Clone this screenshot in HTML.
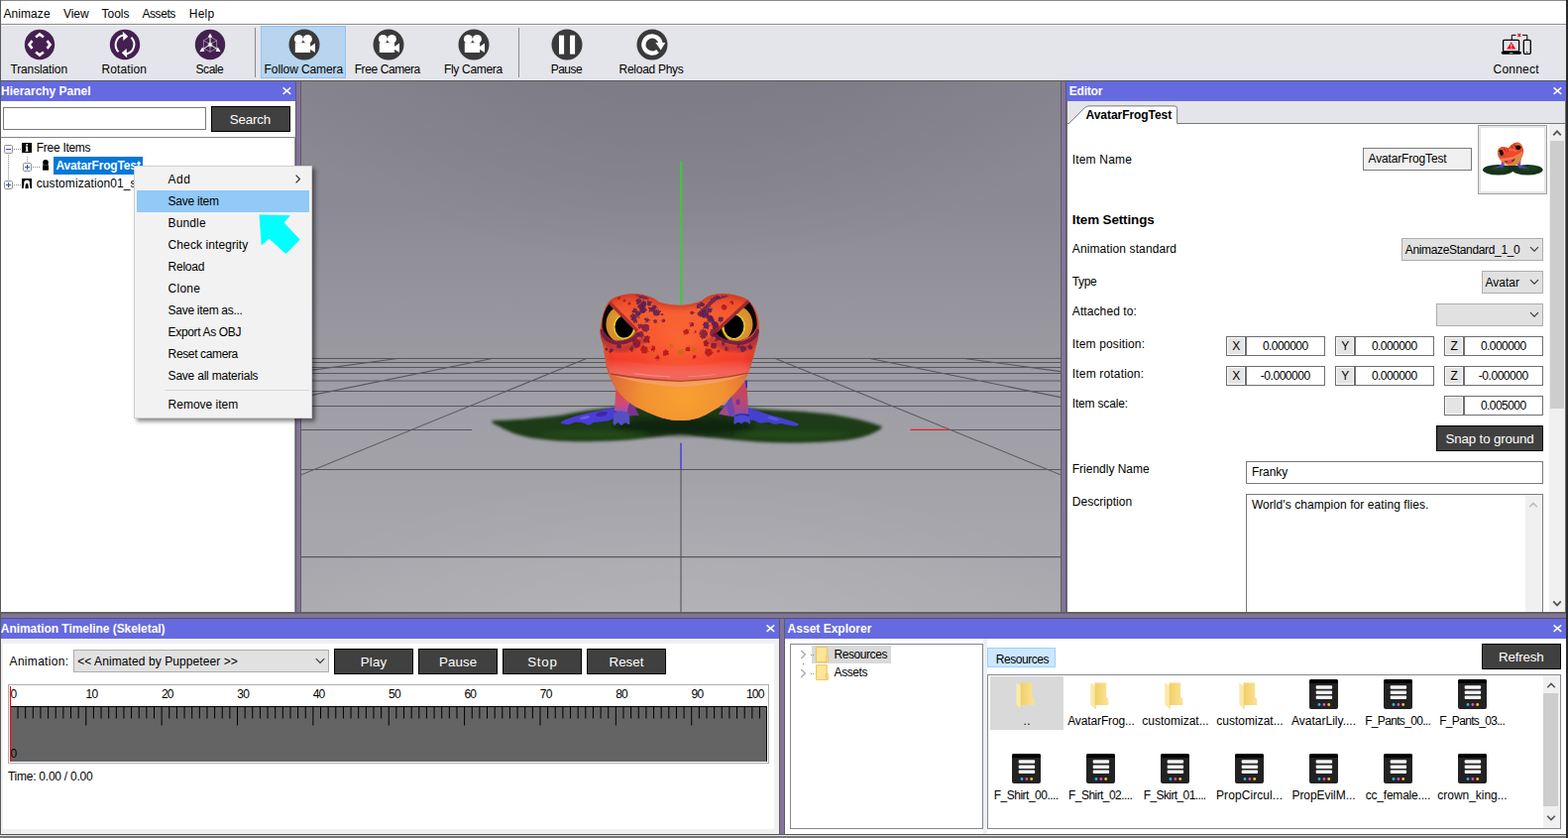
<!DOCTYPE html>
<html lang="en"><head><meta charset="utf-8"><title>Animaze Editor</title>
<style>
html,body{margin:0;padding:0;}
body{width:1582px;height:845px;overflow:hidden;background:#fff;font-family:"Liberation Sans", sans-serif;font-size:12px;position:relative;}
.a{position:absolute;box-sizing:border-box;}
.t{position:absolute;white-space:nowrap;line-height:1;}
svg{position:absolute;overflow:visible;}
</style></head>
<body>
<div class="a" style="left:0px;top:0px;width:1582px;height:845px;background:#ffffff;"></div>
<div class="a" style="left:0px;top:81px;width:1580px;height:761px;background:#84739b;"></div>
<div class="a" style="left:0px;top:0px;width:1582px;height:1px;background:#8a8a8a;"></div>
<div class="a" style="left:1px;top:1px;width:1579px;height:21px;background:#ffffff;"></div>
<div class="a" style="left:1px;top:22px;width:1579px;height:2px;background:#f6f6f6;"></div>
<div class="a" style="left:1px;top:24px;width:1579px;height:1px;background:#8e8e8e;"></div>
<div class="a" style="left:1px;top:25px;width:1579px;height:1px;background:#fbfbfb;"></div>
<div class="a" style="left:1px;top:26px;width:1579px;height:55px;background:#e4e5ea;"></div>
<div class="a" style="left:1px;top:81px;width:1579px;height:1px;background:#5a5a5a;"></div>
<span class="t" style="top:8.34px;font-size:12px;color:#000;letter-spacing:0.083px;left:3.40px;">Animaze</span>
<span class="t" style="top:8.34px;font-size:12px;color:#000;letter-spacing:-0.098px;left:64.10px;">View</span>
<span class="t" style="top:8.34px;font-size:12px;color:#000;left:102.50px;">Tools</span>
<span class="t" style="top:8.34px;font-size:12px;color:#000;letter-spacing:-0.443px;left:143.50px;">Assets</span>
<span class="t" style="top:8.34px;font-size:12px;color:#000;letter-spacing:0.240px;left:190.80px;">Help</span>
<div class="a" style="left:263px;top:26px;width:86px;height:53px;background:#b8d4ee;border:1px solid #90c3f3;"></div>
<div class="a" style="left:257px;top:28px;width:1px;height:50px;background:#8c8c8c;"></div>
<div class="a" style="left:523px;top:28px;width:1px;height:50px;background:#8c8c8c;"></div>
<span class="t" style="top:64.34px;font-size:12px;color:#000;letter-spacing:-0.122px;left:10.40px;">Translation</span>
<span class="t" style="top:64.34px;font-size:12px;color:#000;letter-spacing:0.114px;left:102.50px;">Rotation</span>
<span class="t" style="top:64.34px;font-size:12px;color:#000;letter-spacing:-0.482px;left:197.60px;">Scale</span>
<span class="t" style="top:64.34px;font-size:12px;color:#000;letter-spacing:-0.092px;left:266.60px;">Follow Camera</span>
<span class="t" style="top:64.34px;font-size:12px;color:#000;letter-spacing:-0.410px;left:357.70px;">Free Camera</span>
<span class="t" style="top:64.34px;font-size:12px;color:#000;letter-spacing:-0.302px;left:447.90px;">Fly Camera</span>
<span class="t" style="top:64.34px;font-size:12px;color:#000;letter-spacing:-0.559px;left:555.80px;">Pause</span>
<span class="t" style="top:64.34px;font-size:12px;color:#000;letter-spacing:-0.285px;left:624.60px;">Reload Phys</span>
<span class="t" style="top:64.34px;font-size:12px;color:#000;letter-spacing:0.198px;left:1506.60px;">Connect</span>
<svg style="left:24px;top:29px" width="32" height="32" viewBox="-16 -16 32 32"><circle r="15.2" fill="#432050"/><g transform="rotate(0)"><path d="M-3.9 -7.5 L0 -10.6 L3.9 -7.5" fill="none" stroke="#fff" stroke-width="2.6" stroke-linecap="butt" stroke-linejoin="miter"/></g><g transform="rotate(90)"><path d="M-3.9 -7.5 L0 -10.6 L3.9 -7.5" fill="none" stroke="#fff" stroke-width="2.6" stroke-linecap="butt" stroke-linejoin="miter"/></g><g transform="rotate(180)"><path d="M-3.9 -7.5 L0 -10.6 L3.9 -7.5" fill="none" stroke="#fff" stroke-width="2.6" stroke-linecap="butt" stroke-linejoin="miter"/></g><g transform="rotate(270)"><path d="M-3.9 -7.5 L0 -10.6 L3.9 -7.5" fill="none" stroke="#fff" stroke-width="2.6" stroke-linecap="butt" stroke-linejoin="miter"/></g></svg>
<svg style="left:110px;top:29px" width="32" height="32" viewBox="-16 -16 32 32"><circle r="15.2" fill="#432050"/><path d="M-6.4 7.2 A9.8 9.8 0 0 1 -1.6 -9.4" fill="none" stroke="#fff" stroke-width="2"/><path d="M-2.2 -13.2 L3.2 -8.3 L-1.6 -4.0 Z" fill="#fff"/><path d="M6.4 -7.2 A9.8 9.8 0 0 1 1.6 9.4" fill="none" stroke="#fff" stroke-width="2"/><path d="M2.2 13.2 L-3.2 8.3 L1.6 4.0 Z" fill="#fff"/></svg>
<svg style="left:196px;top:29px" width="32" height="32" viewBox="-16 -16 32 32"><circle r="15.2" fill="#432050"/><g fill="none" stroke="#fff" stroke-opacity="0.55" stroke-width="0.8"><path d="M0 -8 L6.6 -4.2 L6.6 3.6 L0 7.4 L-6.6 3.6 L-6.6 -4.2 Z"/><path d="M0 -0.4 L6.6 -4.2 M0 -0.4 L-6.6 -4.2 M0 -0.4 L0 7.4"/><path d="M0 0 L-6.6 3.6 M0 0 L6.6 3.6 M0 0 L0 -8" stroke-opacity="0.4"/></g><g stroke="#fff" stroke-width="0.9" stroke-opacity="0.95"><path d="M0 0 L0 -9"/><path d="M0 0 L-8 5.2"/><path d="M0 0 L8 5.2"/></g><path d="M-2.3 -7.6 L0 -11.4 L2.3 -7.6 Z" fill="#fff"/><path d="M-10.6 7.2 L-7.8 2.6 L-5.6 6.8 Z" fill="#fff"/><path d="M10.6 7.2 L7.8 2.6 L5.6 6.8 Z" fill="#fff"/><circle r="2.6" fill="#fff" fill-opacity="0.35"/><circle r="1.7" fill="#fff" fill-opacity="0.9"/></svg>
<svg style="left:291px;top:29px" width="32" height="32" viewBox="-16 -16 32 32"><circle r="15.5" fill="#3a3a3a"/><circle cx="-5.6" cy="-5.6" r="4.5" fill="#fff"/><circle cx="3.4" cy="-5.6" r="4.5" fill="#fff"/><rect x="-9.2" y="-1.8" width="15.3" height="9.8" fill="#fff"/><path d="M6 2 L11 -1.4 L11 8 L6 4.8 Z" fill="#fff"/></svg>
<svg style="left:376px;top:29px" width="32" height="32" viewBox="-16 -16 32 32"><circle r="15.5" fill="#3a3a3a"/><circle cx="-5.6" cy="-5.6" r="4.5" fill="#fff"/><circle cx="3.4" cy="-5.6" r="4.5" fill="#fff"/><rect x="-9.2" y="-1.8" width="15.3" height="9.8" fill="#fff"/><path d="M6 2 L11 -1.4 L11 8 L6 4.8 Z" fill="#fff"/></svg>
<svg style="left:462px;top:29px" width="32" height="32" viewBox="-16 -16 32 32"><circle r="15.5" fill="#3a3a3a"/><circle cx="-5.6" cy="-5.6" r="4.5" fill="#fff"/><circle cx="3.4" cy="-5.6" r="4.5" fill="#fff"/><rect x="-9.2" y="-1.8" width="15.3" height="9.8" fill="#fff"/><path d="M6 2 L11 -1.4 L11 8 L6 4.8 Z" fill="#fff"/></svg>
<svg style="left:556px;top:29px" width="32" height="32" viewBox="-16 -16 32 32"><circle r="15.5" fill="#3a3a3a"/><rect x="-8" y="-9.4" width="5.1" height="19" fill="#fff"/><rect x="3" y="-9.4" width="5.1" height="19" fill="#fff"/></svg>
<svg style="left:642px;top:29px" width="32" height="32" viewBox="-16 -16 32 32"><circle r="15.5" fill="#3a3a3a"/><path d="M5.53 6.59 A8.6 8.6 0 1 1 8.5 -1.3" fill="none" stroke="#fff" stroke-width="4.3"/><path d="M3.4 -1.9 L13.3 -1.9 L8.7 5.4 Z" fill="#fff"/></svg>
<svg style="left:0;top:0" width="1582" height="82" viewBox="0 0 1582 82"><g fill="none" stroke="#000" stroke-width="1.3"><rect x="1516.6" y="40.4" width="16" height="11.5" rx="1"/><rect x="1537.3" y="40.3" width="7" height="14" rx="1.3"/><path d="M1525.3 40 L1525.3 35.4 L1529.6 35.4 M1536 35.4 L1540.8 35.4 L1540.8 40" stroke-width="1"/></g><path d="M1514.8 52 L1534.8 52 L1534.8 53.4 Q1534.8 54.8 1533.3 54.8 L1516.3 54.8 Q1514.8 54.8 1514.8 53.4 Z" fill="#000"/><rect x="1523" y="53.2" width="3.4" height="0.9" fill="#bbb"/><circle cx="1540.8" cy="52.6" r="0.7" fill="#000"/><path d="M1524.8 42.2 L1529.4 49.6 L1520.2 49.6 Z" fill="#e81123"/><rect x="1524.4" y="44.4" width="0.9" height="3" fill="#fff"/><rect x="1524.4" y="48" width="0.9" height="0.9" fill="#fff"/><path d="M1531.4 34 L1534.2 37 M1534.2 34 L1531.4 37" stroke="#e81123" stroke-width="1.1" fill="none"/></svg>
<div class="a" style="left:1px;top:82px;width:297px;height:20px;background:#656ae0;"></div>
<div class="a" style="left:1px;top:102px;width:297px;height:515px;background:#ffffff;"></div>
<div class="a" style="left:298px;top:82px;width:1px;height:536px;background:#5c5c60;"></div>
<div class="a" style="left:303px;top:82px;width:1px;height:536px;background:#5c5c60;"></div>
<span class="t" style="top:86.44px;font-size:12px;color:#fff;font-weight:700;letter-spacing:-0.009px;left:1.00px;">Hierarchy Panel</span>
<svg style="left:285px;top:88px" width="9" height="8" viewBox="0 0 9 8"><path d="M0.6 0.4 L8.2 6.9 M8.2 0.4 L0.6 6.9" stroke="#fff" stroke-width="1.5" fill="none"/></svg>
<div class="a" style="left:3px;top:108px;width:205px;height:23px;background:#fff;border:1px solid #7a7a7a;"></div>
<div class="a" style="left:213px;top:107px;width:80px;height:26px;background:#404040;border:1px solid #000;"></div>
<span class="t" style="top:114.32px;font-size:13.33px;color:#fff;letter-spacing:-0.167px;left:231.80px;">Search</span>
<div class="a" style="left:1px;top:138px;width:297px;height:1px;background:#82858c;"></div>
<div class="a" style="left:297px;top:138px;width:1px;height:479px;background:#9a9a9a;"></div>
<div class="a" style="left:14px;top:150px;width:8px;height:1px;background:repeating-linear-gradient(90deg,#8a8a8a 0 1px,transparent 1px 2px);"></div>
<div class="a" style="left:33px;top:168px;width:8px;height:1px;background:repeating-linear-gradient(90deg,#8a8a8a 0 1px,transparent 1px 2px);"></div>
<div class="a" style="left:14px;top:186px;width:8px;height:1px;background:repeating-linear-gradient(90deg,#8a8a8a 0 1px,transparent 1px 2px);"></div>
<div class="a" style="left:8px;top:156px;width:1px;height:26px;background:repeating-linear-gradient(180deg,#8a8a8a 0 1px,transparent 1px 2px);"></div>
<div class="a" style="left:27px;top:158px;width:1px;height:6px;background:repeating-linear-gradient(180deg,#8a8a8a 0 1px,transparent 1px 2px);"></div>
<svg style="left:4px;top:146px" width="9" height="9" viewBox="0 0 9 9"><rect x="0.5" y="0.5" width="8" height="8" rx="1.2" fill="#f4f4f4" stroke="#929292"/><rect x="1.2" y="1.2" width="6.6" height="3.2" fill="#fff"/><path d="M2 4.5 H7" stroke="#3a50b0" stroke-width="1"/></svg>
<svg style="left:23px;top:164px" width="9" height="9" viewBox="0 0 9 9"><rect x="0.5" y="0.5" width="8" height="8" rx="1.2" fill="#f4f4f4" stroke="#929292"/><rect x="1.2" y="1.2" width="6.6" height="3.2" fill="#fff"/><path d="M2 4.5 H7" stroke="#3a50b0" stroke-width="1"/><path d="M4.5 2 V7" stroke="#3a50b0" stroke-width="1"/></svg>
<svg style="left:4px;top:182px" width="9" height="9" viewBox="0 0 9 9"><rect x="0.5" y="0.5" width="8" height="8" rx="1.2" fill="#f4f4f4" stroke="#929292"/><rect x="1.2" y="1.2" width="6.6" height="3.2" fill="#fff"/><path d="M2 4.5 H7" stroke="#3a50b0" stroke-width="1"/><path d="M4.5 2 V7" stroke="#3a50b0" stroke-width="1"/></svg>
<svg style="left:22px;top:144px" width="10" height="10" viewBox="0 0 10 10"><rect width="10" height="10" fill="#000"/><rect x="4.3" y="1.1" width="1.7" height="1.6" fill="#fff"/><path d="M3.8 3.6 H6 V8 H6.6 V8.8 H3.6 V8 H4.3 V4.4 H3.8 Z" fill="#fff"/></svg>
<svg style="left:43px;top:161px" width="7" height="11" viewBox="43 161 7 11"><circle cx="46" cy="164" r="2.9" fill="#000"/><path d="M43.1 166.4 H49 V171.7 H43.1 Z" fill="#000"/><path d="M45 166.4 L46 167.4 L47 166.4 Z" fill="#777"/></svg>
<svg style="left:22px;top:180px" width="10" height="10" viewBox="22 180 10 10"><rect x="22" y="180" width="10" height="10" fill="#000"/><path d="M23.6 190 Q24.6 186 24.3 183.6 Q24.6 181.5 27.1 181.5 Q29.6 181.5 29.9 183.6 Q29.6 186 30.6 190 L28.7 190 Q28.9 185.4 27.1 184.6 Q25.4 185.4 25.5 190 Z" fill="#fff"/></svg>
<span class="t" style="top:143.04px;font-size:12px;color:#000;letter-spacing:-0.284px;left:36.80px;">Free Items</span>
<div class="a" style="left:54px;top:158px;width:90px;height:18px;background:#0078d7;"></div>
<span class="t" style="top:161.34px;font-size:12px;color:#fff;font-weight:700;letter-spacing:-0.143px;left:56.40px;">AvatarFrogTest</span>
<span class="t" style="top:178.74px;font-size:12px;color:#000;letter-spacing:0.077px;left:36.80px;">customization01_set</span>
<svg style="left:304px;top:82px" width="766" height="536" viewBox="304 82 766 536"><defs><linearGradient id="sky" x1="0" y1="82" x2="0" y2="618" gradientUnits="userSpaceOnUse"><stop offset="0" stop-color="#86848e"/><stop offset="0.0224" stop-color="#87858f"/><stop offset="0.239" stop-color="#8c8b95"/><stop offset="0.49" stop-color="#9a989f"/><stop offset="0.575" stop-color="#9f9da5"/><stop offset="0.957" stop-color="#aaa9ae"/><stop offset="1" stop-color="#abaaaf"/></linearGradient><radialGradient id="skyc" cx="0" cy="0" r="1" gradientUnits="userSpaceOnUse" gradientTransform="translate(687 60) scale(430 210)"><stop offset="0" stop-color="#000" stop-opacity="0.075"/><stop offset="0.45" stop-color="#000" stop-opacity="0.055"/><stop offset="1" stop-color="#000" stop-opacity="0"/></radialGradient><radialGradient id="skyd" cx="0" cy="0" r="1" gradientUnits="userSpaceOnUse" gradientTransform="translate(687 650) scale(440 170)"><stop offset="0" stop-color="#fff" stop-opacity="0.11"/><stop offset="0.45" stop-color="#fff" stop-opacity="0.07"/><stop offset="1" stop-color="#fff" stop-opacity="0"/></radialGradient><clipPath id="vp"><rect x="304" y="82" width="766" height="536"/></clipPath><filter id="b1" x="-10%" y="-30%" width="120%" height="160%"><feGaussianBlur stdDeviation="1.6"/></filter><filter id="b05"><feGaussianBlur stdDeviation="0.6"/></filter><filter id="b2" x="-20%" y="-20%" width="140%" height="140%"><feGaussianBlur stdDeviation="2.5"/></filter></defs><rect x="304" y="82" width="766" height="536" fill="url(#sky)"/><rect x="304" y="82" width="766" height="536" fill="url(#skyc)"/><rect x="304" y="82" width="766" height="536" fill="url(#skyd)"/><g clip-path="url(#vp)"><path d="M304 361.4 H1070 M304 365.5 H1070 M304 370.4 H1070 M304 376.4 H1070 M304 384.0 H1070 M304 394.5 H1070 M304 409.5 H1070 M304 433.4 H476 M957 433.4 H1070 M304 473.5 H1070 M304 561.6 H1070 M-449.4 361.2 L-9246.2 660 M-354.7 361.2 L-8418.4 660 M-260.0 361.2 L-7590.7 660 M-165.3 361.2 L-6762.9 660 M-70.6 361.2 L-5935.1 660 M24.1 361.2 L-5107.4 660 M118.8 361.2 L-4279.6 660 M213.5 361.2 L-3451.8 660 M308.2 361.2 L-2624.1 660 M402.9 361.2 L-1796.3 660 M497.6 361.2 L-968.5 660 M592.3 361.2 L-140.8 660 M781.7 361.2 L1514.8 660 M876.4 361.2 L2342.5 660 M971.1 361.2 L3170.3 660 M1065.8 361.2 L3998.1 660 M1160.5 361.2 L4825.8 660 M1255.2 361.2 L5653.6 660 M1349.9 361.2 L6481.4 660 M1444.6 361.2 L7309.1 660 M1539.3 361.2 L8136.9 660 M1634.0 361.2 L8964.7 660 M1728.7 361.2 L9792.4 660 M1823.4 361.2 L10620.2 660" stroke="#505052" stroke-width="1.05" fill="none" stroke-opacity="0.9"/><path d="M687 473.5 V618" stroke="#505052" stroke-width="1.05"/><path d="M918.4 433.4 H957" stroke="#e02020" stroke-width="1.2"/><path d="M687 446.8 V473.5" stroke="#3a3ae0" stroke-width="1.4"/><path d="M687.2 162.5 V308" stroke="#3ccc3c" stroke-width="2"/></g><g><defs><linearGradient id="hg" x1="0" y1="296" x2="0" y2="424" gradientUnits="userSpaceOnUse"><stop offset="0" stop-color="#ea4a2a"/><stop offset="0.16" stop-color="#f45c30"/><stop offset="0.38" stop-color="#f6502e"/><stop offset="0.52" stop-color="#f53c2a"/><stop offset="0.62" stop-color="#f4503e"/><stop offset="0.68" stop-color="#f46a62"/><stop offset="1" stop-color="#f46a62"/></linearGradient><radialGradient id="hs" cx="686" cy="345" r="85" gradientUnits="userSpaceOnUse" gradientTransform="translate(0 0)"><stop offset="0" stop-color="#ff7a3a" stop-opacity="0.55"/><stop offset="0.5" stop-color="#ff6a34" stop-opacity="0.15"/><stop offset="1" stop-color="#c02020" stop-opacity="0.0"/></radialGradient><radialGradient id="cg" cx="690" cy="400" r="75" gradientUnits="userSpaceOnUse"><stop offset="0" stop-color="#f9a030"/><stop offset="0.55" stop-color="#f09232"/><stop offset="1" stop-color="#df6a38"/></radialGradient><linearGradient id="lg" x1="0" y1="390" x2="0" y2="420" gradientUnits="userSpaceOnUse"><stop offset="0" stop-color="#e2483c"/><stop offset="0.55" stop-color="#d04a78"/><stop offset="1" stop-color="#8a50c0"/></linearGradient><linearGradient id="lg2" x1="0" y1="385" x2="0" y2="420" gradientUnits="userSpaceOnUse"><stop offset="0" stop-color="#c8484a"/><stop offset="0.6" stop-color="#b84870"/><stop offset="1" stop-color="#8a48b0"/></linearGradient><linearGradient id="lipg" x1="0" y1="362" x2="0" y2="384" gradientUnits="userSpaceOnUse"><stop offset="0" stop-color="#f4645c" stop-opacity="0"/><stop offset="0.6" stop-color="#f4685e" stop-opacity="0.8"/><stop offset="1" stop-color="#ee645c" stop-opacity="1"/></linearGradient><radialGradient id="ig" cx="0.5" cy="0.5" r="0.6"><stop offset="0" stop-color="#e6a432"/><stop offset="1" stop-color="#cf872c"/></radialGradient><clipPath id="hc"><path d="M686.4 307.8 C680.3 308.0 672.9 306.9 668.1 305.6 C663.3 304.3 661.6 301.5 657.7 300.0 C653.8 298.5 649.5 297.0 644.7 296.5 C639.9 296.0 633.8 296.2 629.0 297.2 C624.2 298.2 619.2 299.9 616.0 302.6 C612.8 305.3 611.1 309.4 609.5 313.6 C607.9 317.8 606.9 324.1 606.3 328.0 C605.6 331.9 605.3 333.9 605.6 337.1 C605.9 340.4 607.3 343.2 608.2 347.5 C609.1 351.8 609.9 358.6 610.8 363.1 C611.7 367.7 611.6 370.1 613.4 374.8 C615.1 379.5 618.0 386.6 621.3 391.5 C624.6 396.4 628.5 400.8 633.0 404.5 C637.5 408.2 642.8 410.8 648.6 413.6 C654.5 416.4 661.8 419.7 668.1 421.4 C674.4 423.1 680.3 424.0 686.4 424.0 C692.5 424.0 699.0 423.1 704.6 421.4 C710.2 419.7 715.0 416.9 720.2 413.6 C725.4 410.4 731.0 406.2 735.8 401.9 C740.6 397.6 745.6 392.2 748.9 387.6 C752.2 383.0 753.7 378.6 755.4 374.5 C757.1 370.4 758.2 366.4 759.3 362.8 C760.4 359.2 760.9 356.6 761.9 352.7 C762.9 348.8 764.5 343.8 765.1 339.7 C765.8 335.6 766.1 332.1 765.8 328.0 C765.5 323.9 764.9 319.1 763.2 315.0 C761.5 310.9 758.7 306.0 755.4 303.2 C752.1 300.4 748.2 299.2 743.6 298.0 C739.0 296.8 732.8 296.0 728.0 296.1 C723.2 296.2 718.9 297.3 715.0 298.7 C711.1 300.1 709.4 303.0 704.6 304.5 C699.8 306.0 692.5 307.6 686.4 307.8 Z"/></clipPath><clipPath id="le"><path d="M614.3 306.6 L641.8 334.6 Q637 343.4 622 343.8 Q610.5 341 607.6 330 Q606.8 317 614.3 306.6 Z"/></clipPath><clipPath id="re"><path d="M756.2 304.8 L722.6 336 Q728 343.6 744 343.9 Q758.5 342 763.4 330 Q765 317 756.2 304.8 Z"/></clipPath><filter id="sp" x="-5%" y="-5%" width="110%" height="110%"><feTurbulence type="fractalNoise" baseFrequency="0.35" numOctaves="2" seed="4" result="n"/><feDisplacementMap in="SourceGraphic" in2="n" scale="3.2" xChannelSelector="R" yChannelSelector="G"/><feGaussianBlur stdDeviation="0.55"/></filter></defs><path d="M496.0 425.0 C497.1 423.7 506.8 424.0 513.0 423.5 C519.2 423.0 525.2 422.8 533.0 422.2 C540.8 421.6 551.2 420.8 560.0 419.6 C568.8 418.4 576.2 416.3 586.0 414.9 C595.8 413.4 608.3 411.8 619.0 410.9 C629.7 410.0 638.2 410.1 650.0 409.8 C661.8 409.6 676.7 409.4 690.0 409.4 C703.3 409.4 718.9 409.4 730.0 409.8 C741.1 410.2 747.6 411.0 756.4 411.6 C765.2 412.2 774.1 412.8 783.0 413.4 C791.9 413.9 800.7 414.2 809.5 414.9 C818.3 415.6 827.1 416.4 836.0 417.6 C844.9 418.8 854.9 420.6 862.6 422.2 C870.4 423.8 878.0 425.9 882.5 427.5 C887.0 429.1 890.6 429.6 889.5 431.5 C888.4 433.4 881.6 436.8 876.0 438.8 C870.4 440.8 863.8 442.4 856.0 443.5 C848.2 444.6 839.4 445.2 829.4 445.7 C819.4 446.2 807.3 446.6 796.2 446.5 C785.1 446.4 774.1 446.1 763.0 445.4 C751.9 444.7 739.8 443.5 729.8 442.5 C719.8 441.5 709.9 440.4 703.3 439.5 C696.7 438.6 694.0 437.6 690.0 437.4 C686.0 437.2 684.2 437.5 679.0 438.1 C673.8 438.7 667.8 439.8 659.0 440.8 C650.2 441.8 637.0 443.4 626.0 444.1 C615.0 444.8 602.8 445.1 592.8 445.2 C582.8 445.3 575.1 445.3 566.3 444.8 C557.4 444.3 547.5 443.3 539.7 442.1 C532.0 440.9 525.3 439.3 519.8 437.5 C514.3 435.7 510.5 433.6 506.5 431.5 C502.5 429.4 494.9 426.3 496.0 425.0 Z" fill="#1a3a15" filter="url(#b1)"/><path d="M496.0 425.0 C497.1 423.7 506.8 424.0 513.0 423.5 C519.2 423.0 525.2 422.8 533.0 422.2 C540.8 421.6 551.2 420.8 560.0 419.6 C568.8 418.4 576.2 416.3 586.0 414.9 C595.8 413.4 608.3 411.8 619.0 410.9 C629.7 410.0 638.2 410.1 650.0 409.8 C661.8 409.6 676.7 409.4 690.0 409.4 C703.3 409.4 718.9 409.4 730.0 409.8 C741.1 410.2 747.6 411.0 756.4 411.6 C765.2 412.2 774.1 412.8 783.0 413.4 C791.9 413.9 800.7 414.2 809.5 414.9 C818.3 415.6 827.1 416.4 836.0 417.6 C844.9 418.8 854.9 420.6 862.6 422.2 C870.4 423.8 878.0 425.9 882.5 427.5 C887.0 429.1 890.6 429.6 889.5 431.5 C888.4 433.4 881.6 436.8 876.0 438.8 C870.4 440.8 863.8 442.4 856.0 443.5 C848.2 444.6 839.4 445.2 829.4 445.7 C819.4 446.2 807.3 446.6 796.2 446.5 C785.1 446.4 774.1 446.1 763.0 445.4 C751.9 444.7 739.8 443.5 729.8 442.5 C719.8 441.5 709.9 440.4 703.3 439.5 C696.7 438.6 694.0 437.6 690.0 437.4 C686.0 437.2 684.2 437.5 679.0 438.1 C673.8 438.7 667.8 439.8 659.0 440.8 C650.2 441.8 637.0 443.4 626.0 444.1 C615.0 444.8 602.8 445.1 592.8 445.2 C582.8 445.3 575.1 445.3 566.3 444.8 C557.4 444.3 547.5 443.3 539.7 442.1 C532.0 440.9 525.3 439.3 519.8 437.5 C514.3 435.7 510.5 433.6 506.5 431.5 C502.5 429.4 494.9 426.3 496.0 425.0 Z" fill="#173414" transform="translate(34.4 21.5) scale(0.95 0.95)" filter="url(#b2)" opacity="0.0"/><ellipse cx="690" cy="430" rx="70" ry="9" fill="#0f2410" filter="url(#b2)" opacity="0.85"/><ellipse cx="600" cy="438" rx="55" ry="4" fill="#2a5a1e" filter="url(#b2)" opacity="0.5"/><ellipse cx="800" cy="438" rx="60" ry="4" fill="#2a5a1e" filter="url(#b2)" opacity="0.5"/><path d="M620.0 411.6 C618.0 410.2 610.8 413.1 606.0 414.0 C601.2 414.9 596.0 415.9 591.3 417.0 C586.6 418.1 582.2 419.2 578.0 420.6 C573.8 422.0 567.8 424.2 566.2 425.4 C564.6 426.6 567.0 427.2 568.4 427.6 C569.8 428.0 572.2 428.2 574.3 427.9 C576.4 427.6 578.7 425.9 581.0 425.6 C583.3 425.4 585.8 425.9 588.0 426.4 C590.2 426.9 592.4 428.7 594.2 428.6 C596.0 428.5 597.0 426.6 599.0 426.0 C601.0 425.4 602.9 425.8 606.1 425.2 C609.3 424.6 616.0 424.5 618.3 422.2 C620.6 419.9 622.0 413.0 620.0 411.6 Z" fill="#4a3cd6"/><path d="M754.7 411.8 C756.1 410.5 761.7 413.6 765.0 414.6 C768.3 415.6 770.4 416.6 774.6 417.8 C778.8 419.0 784.9 420.5 790.0 422.0 C795.1 423.5 802.8 425.7 805.0 427.0 C807.2 428.3 804.7 429.3 803.0 429.6 C801.3 429.9 797.5 429.0 795.0 428.6 C792.5 428.2 790.2 427.1 788.0 427.0 C785.8 426.9 783.8 428.0 781.6 427.8 C779.4 427.6 777.4 426.0 775.0 425.8 C772.6 425.6 769.3 426.9 767.0 426.6 C764.7 426.3 762.8 424.7 761.0 424.0 C759.2 423.3 757.5 424.6 756.5 422.6 C755.5 420.6 753.3 413.1 754.7 411.8 Z" fill="#4440d2"/><ellipse cx="607" cy="417.5" rx="6" ry="2.2" fill="#3a1fa0" transform="rotate(-12 607 417.5)" opacity="0.8"/><ellipse cx="590" cy="421" rx="5" ry="1.6" fill="#6a66f0" transform="rotate(-12 590 421)" opacity="0.8"/><ellipse cx="780" cy="422" rx="6" ry="1.6" fill="#6460ec" transform="rotate(14 780 422)" opacity="0.7"/><path d="M635 401 L645 418.8 L633.4 419.6 Z" fill="#7a3490"/><path d="M739 397.5 L725 417.6 L741.4 420.6 Z" fill="#6f48ae"/><path d="M733 409 L725 417.6 L736 419.6 Z" fill="#b04a80" opacity="0.8"/><path d="M621.6 389 L620 414 L633.4 419 L634.2 400 Z" fill="url(#lg)"/><path d="M753.2 383 L755.2 417.5 L741.2 420 L738.8 398 Z" fill="url(#lg2)"/><ellipse cx="744.6" cy="405.6" rx="2" ry="3" fill="#6a28b0" opacity="0.8"/><path d="M751.4 383.6 L754 383.4 L754 391 L752.6 391 Z" fill="#3a34c8"/><path d="M619 420 Q618.4 414.4 626.5 414.2 Q634.6 414.2 635.2 420.5 L635.4 427.6 Q633.8 429 632.4 426.4 Q630.6 425.4 628 428.6 Q625.6 429.4 624.6 426.4 Q622 426 620.6 428.8 Q618.4 429 618.6 425.6 Z" fill="#5450c4"/><path d="M741 420.6 Q741 417 748.5 416.8 Q756.2 417 756.6 421 L757 427 Q755.6 428.2 754.6 426 Q751 423.8 748 427.6 Q745 423.6 741.6 427.8 Q739.8 427.6 740.4 424.6 Z" fill="#4c48d4"/><path d="M742 420 Q748.5 416.4 756 420.2 L756 418.6 Q748.5 415.6 741.6 418.8 Z" fill="#2e2a8a"/><path d="M686.4 307.8 C680.3 308.0 672.9 306.9 668.1 305.6 C663.3 304.3 661.6 301.5 657.7 300.0 C653.8 298.5 649.5 297.0 644.7 296.5 C639.9 296.0 633.8 296.2 629.0 297.2 C624.2 298.2 619.2 299.9 616.0 302.6 C612.8 305.3 611.1 309.4 609.5 313.6 C607.9 317.8 606.9 324.1 606.3 328.0 C605.6 331.9 605.3 333.9 605.6 337.1 C605.9 340.4 607.3 343.2 608.2 347.5 C609.1 351.8 609.9 358.6 610.8 363.1 C611.7 367.7 611.6 370.1 613.4 374.8 C615.1 379.5 618.0 386.6 621.3 391.5 C624.6 396.4 628.5 400.8 633.0 404.5 C637.5 408.2 642.8 410.8 648.6 413.6 C654.5 416.4 661.8 419.7 668.1 421.4 C674.4 423.1 680.3 424.0 686.4 424.0 C692.5 424.0 699.0 423.1 704.6 421.4 C710.2 419.7 715.0 416.9 720.2 413.6 C725.4 410.4 731.0 406.2 735.8 401.9 C740.6 397.6 745.6 392.2 748.9 387.6 C752.2 383.0 753.7 378.6 755.4 374.5 C757.1 370.4 758.2 366.4 759.3 362.8 C760.4 359.2 760.9 356.6 761.9 352.7 C762.9 348.8 764.5 343.8 765.1 339.7 C765.8 335.6 766.1 332.1 765.8 328.0 C765.5 323.9 764.9 319.1 763.2 315.0 C761.5 310.9 758.7 306.0 755.4 303.2 C752.1 300.4 748.2 299.2 743.6 298.0 C739.0 296.8 732.8 296.0 728.0 296.1 C723.2 296.2 718.9 297.3 715.0 298.7 C711.1 300.1 709.4 303.0 704.6 304.5 C699.8 306.0 692.5 307.6 686.4 307.8 Z" fill="url(#hg)"/><g clip-path="url(#hc)"><rect x="600" y="290" width="170" height="140" fill="url(#hs)"/><path d="M686.4 307.8 C680.3 308.0 672.9 306.9 668.1 305.6 C663.3 304.3 661.6 301.5 657.7 300.0 C653.8 298.5 649.5 297.0 644.7 296.5 C639.9 296.0 633.8 296.2 629.0 297.2 C624.2 298.2 619.2 299.9 616.0 302.6 C612.8 305.3 611.1 309.4 609.5 313.6 C607.9 317.8 606.9 324.1 606.3 328.0 C605.6 331.9 605.3 333.9 605.6 337.1 C605.9 340.4 607.3 343.2 608.2 347.5 C609.1 351.8 609.9 358.6 610.8 363.1 C611.7 367.7 611.6 370.1 613.4 374.8 C615.1 379.5 618.0 386.6 621.3 391.5 C624.6 396.4 628.5 400.8 633.0 404.5 C637.5 408.2 642.8 410.8 648.6 413.6 C654.5 416.4 661.8 419.7 668.1 421.4 C674.4 423.1 680.3 424.0 686.4 424.0 C692.5 424.0 699.0 423.1 704.6 421.4 C710.2 419.7 715.0 416.9 720.2 413.6 C725.4 410.4 731.0 406.2 735.8 401.9 C740.6 397.6 745.6 392.2 748.9 387.6 C752.2 383.0 753.7 378.6 755.4 374.5 C757.1 370.4 758.2 366.4 759.3 362.8 C760.4 359.2 760.9 356.6 761.9 352.7 C762.9 348.8 764.5 343.8 765.1 339.7 C765.8 335.6 766.1 332.1 765.8 328.0 C765.5 323.9 764.9 319.1 763.2 315.0 C761.5 310.9 758.7 306.0 755.4 303.2 C752.1 300.4 748.2 299.2 743.6 298.0 C739.0 296.8 732.8 296.0 728.0 296.1 C723.2 296.2 718.9 297.3 715.0 298.7 C711.1 300.1 709.4 303.0 704.6 304.5 C699.8 306.0 692.5 307.6 686.4 307.8 Z" fill="none" stroke="#b02620" stroke-width="7" opacity="0.45" filter="url(#b2)"/><ellipse cx="604" cy="372" rx="10" ry="30" fill="#f07a30" filter="url(#b2)" opacity="0.55"/><ellipse cx="767" cy="372" rx="10" ry="30" fill="#d85a30" filter="url(#b2)" opacity="0.6"/><path d="M615.5 376.6 Q650 382.6 686.4 383.9 Q724 382.6 755 375.8 L770 376 L770 430 L600 430 L600 376 Z" fill="url(#cg)"/><path d="M611 361 Q650 368 686.4 369 Q724 368 760 360 L755 375.8 Q724 382.6 686.4 383.9 Q650 382.6 615.5 376.6 Z" fill="url(#lipg)"/><path d="M617.5 378.2 Q650 384.4 686.4 385.8 Q724 384.4 753.6 377.2 Q724 388.6 686.4 390 Q650 388.6 617.5 378.2 Z" fill="#f8a070" opacity="0.8" filter="url(#b05)"/><path d="M616 377 Q650 383 686.4 384.3 Q724 383 754.6 376.2" fill="none" stroke="#9a3c38" stroke-width="1.3" opacity="0.85"/><path d="M640 376.8 Q660 379.4 676 379.8" stroke="#ffd0c0" stroke-width="0.9" fill="none" opacity="0.45"/><path d="M694 379.8 Q712 379 722 377.4" stroke="#ffd0c0" stroke-width="0.9" fill="none" opacity="0.3"/><g filter="url(#sp)"><circle cx="649.2" cy="306.5" r="3" fill="#5a1f52" opacity="0.88"/><circle cx="648.6" cy="312.3" r="3.4" fill="#5a1f52" opacity="0.88"/><circle cx="640.1" cy="313" r="2.5" fill="#5a1f52" opacity="0.88"/><circle cx="638.8" cy="319.5" r="3" fill="#5a1f52" opacity="0.88"/><circle cx="652.5" cy="322.8" r="2.3" fill="#5a1f52" opacity="0.88"/><circle cx="662.3" cy="315" r="3.6" fill="#5a1f52" opacity="0.88"/><circle cx="660" cy="310" r="2.6" fill="#5a1f52" opacity="0.88"/><circle cx="661" cy="324" r="2" fill="#8a1a3a" opacity="0.88"/><circle cx="669.4" cy="323.4" r="1.8" fill="#8a1a3a" opacity="0.88"/><circle cx="668" cy="317.5" r="1.4" fill="#8a1a3a" opacity="0.88"/><circle cx="651.2" cy="330.6" r="3.8" fill="#7a1c40" opacity="0.88"/><circle cx="646.6" cy="337" r="3" fill="#7a1c40" opacity="0.88"/><circle cx="652.5" cy="342.3" r="3.6" fill="#8e1a2c" opacity="0.88"/><circle cx="642" cy="346.2" r="4.6" fill="#8e1a2c" opacity="0.88"/><circle cx="650" cy="352.7" r="3.8" fill="#b01a1c" opacity="0.88"/><circle cx="659" cy="351.4" r="2.4" fill="#b01a1c" opacity="0.88"/><circle cx="672" cy="356" r="3" fill="#b01a1c" opacity="0.88"/><circle cx="663.6" cy="360.5" r="2" fill="#b01a1c" opacity="0.88"/><circle cx="658.4" cy="356.6" r="1.8" fill="#cc6a18" opacity="0.88"/><circle cx="677.2" cy="348.8" r="2" fill="#cc6a18" opacity="0.88"/><circle cx="687" cy="355.3" r="3" fill="#cc6a18" opacity="0.88"/><circle cx="694.2" cy="352" r="2.3" fill="#b01a1c" opacity="0.88"/><circle cx="700.7" cy="352.7" r="2.4" fill="#cc6a18" opacity="0.88"/><circle cx="700.7" cy="359.9" r="1.8" fill="#b01a1c" opacity="0.88"/><circle cx="692.2" cy="334.5" r="2.8" fill="#b01a1c" opacity="0.88"/><circle cx="698" cy="327.3" r="2.3" fill="#8a1a3a" opacity="0.88"/><circle cx="701.3" cy="334.5" r="1.4" fill="#b01a1c" opacity="0.88"/><circle cx="704.6" cy="309" r="2" fill="#5a1f52" opacity="0.88"/><circle cx="698" cy="315.6" r="1.8" fill="#8a1a3a" opacity="0.88"/><circle cx="712.4" cy="328" r="3.6" fill="#5a1f52" opacity="0.88"/><circle cx="721.5" cy="328" r="3.8" fill="#5a1f52" opacity="0.88"/><circle cx="709.8" cy="337" r="4.4" fill="#7a1c40" opacity="0.88"/><circle cx="720.2" cy="335.8" r="4" fill="#7a1c40" opacity="0.88"/><circle cx="712.4" cy="346.2" r="3" fill="#8e1a2c" opacity="0.88"/><circle cx="720" cy="348.8" r="3" fill="#8e1a2c" opacity="0.88"/><circle cx="715" cy="355.3" r="3.8" fill="#b01a1c" opacity="0.88"/><circle cx="724.8" cy="354" r="1.6" fill="#b01a1c" opacity="0.88"/><circle cx="730.6" cy="309.7" r="2.8" fill="#b01a1c" opacity="0.88"/><circle cx="738.4" cy="305.2" r="1.8" fill="#b01a1c" opacity="0.88"/><circle cx="750" cy="351.4" r="3" fill="#5a1f52" opacity="0.88"/><circle cx="757" cy="350" r="2.4" fill="#5a1f52" opacity="0.88"/><circle cx="612" cy="352" r="1.5" fill="#5a1f52" opacity="0.88"/><circle cx="616.7" cy="353.4" r="1.8" fill="#5a1f52" opacity="0.88"/><circle cx="624.5" cy="349.5" r="2.4" fill="#5a1f52" opacity="0.88"/><circle cx="644" cy="303.5" r="2.6" fill="#5a1f52" opacity="0.88"/><circle cx="646" cy="309" r="2.8" fill="#5a1f52" opacity="0.88"/><circle cx="643.5" cy="316" r="2.6" fill="#5a1f52" opacity="0.88"/><circle cx="655" cy="306" r="2.4" fill="#5a1f52" opacity="0.88"/><circle cx="657" cy="312" r="2.6" fill="#5a1f52" opacity="0.88"/><circle cx="641" cy="324" r="2.2" fill="#5a1f52" opacity="0.88"/><circle cx="646" cy="329" r="2.6" fill="#7a1c40" opacity="0.88"/><circle cx="727" cy="322" r="2.6" fill="#5a1f52" opacity="0.88"/><circle cx="716" cy="313" r="2.4" fill="#5a1f52" opacity="0.88"/><circle cx="708" cy="307" r="2.2" fill="#5a1f52" opacity="0.88"/><circle cx="724" cy="341" r="2.6" fill="#7a1c40" opacity="0.88"/><circle cx="730" cy="346" r="2.2" fill="#7a1c40" opacity="0.88"/><circle cx="625" cy="300.5" r="1.5" fill="#b01a1c" opacity="0.88"/><circle cx="630" cy="303" r="1.5" fill="#b01a1c" opacity="0.88"/><circle cx="635" cy="306" r="1.5" fill="#b01a1c" opacity="0.88"/><circle cx="745" cy="349" r="2" fill="#7a1c40" opacity="0.88"/><circle cx="637" cy="352" r="2" fill="#8e1a2c" opacity="0.88"/><circle cx="733" cy="352" r="2" fill="#8e1a2c" opacity="0.88"/><path d="M724 299.5 L717 305 L712 311 L705.5 316.5 L711 318 L716 319.5 L719.5 325" fill="none" stroke="#5a1f52" stroke-width="4.2" stroke-linejoin="round" stroke-linecap="round" opacity="0.8"/><circle cx="711" cy="316.5" r="4.2" fill="#5a1f52" opacity="0.8"/><circle cx="716.5" cy="321.5" r="3.2" fill="#5a1f52" opacity="0.8"/><circle cx="722" cy="330" r="3" fill="#7a1c40" opacity="0.8"/><path d="M650 305 L649 312 L645 318 L640 321" fill="none" stroke="#5a1f52" stroke-width="3" stroke-linejoin="round" stroke-linecap="round" opacity="0.55"/><path d="M640 298.6 Q650 297.4 656 300.6 L650 301.6 Z" fill="#5a1f52" opacity="0.8"/><path d="M718 300.5 Q728 297.4 736 298.4 L726 301.8 Z" fill="#5a1f52" opacity="0.8"/></g><path d="M607 338 Q613 351 627 351.4 Q641 350.6 650 341" fill="none" stroke="#7a1a40" stroke-width="7" opacity="0.4" filter="url(#b1)"/><path d="M765 338 Q759 351 744 351.6 Q727 350.6 715 341" fill="none" stroke="#7a1a40" stroke-width="7" opacity="0.4" filter="url(#b1)"/><path d="M606.4 332 Q611 345.4 624 345.8 Q637.5 345.4 644.5 336" fill="none" stroke="#5e1846" stroke-width="4" opacity="0.8" filter="url(#b05)"/><path d="M765.4 332 Q760 345.6 745 346 Q729 345.4 720 336.4" fill="none" stroke="#5e1846" stroke-width="4" opacity="0.8" filter="url(#b05)"/></g><g clip-path="url(#le)"><rect x="600" y="300" width="50" height="50" fill="#0a0806"/><ellipse cx="627" cy="327" rx="15.6" ry="18.5" fill="url(#ig)"/><ellipse cx="629.8" cy="329.6" rx="10" ry="11.6" fill="#000" stroke="#ece030" stroke-width="1.2"/></g><g clip-path="url(#re)"><rect x="715" y="300" width="55" height="50" fill="#0a0806"/><ellipse cx="743.5" cy="327" rx="16" ry="18.5" fill="url(#ig)"/><ellipse cx="740.4" cy="329.2" rx="10.6" ry="12.4" fill="#000" stroke="#ece030" stroke-width="1.2"/></g><g filter="url(#b05)"><path d="M615.3 305.2 L643.2 333.6" stroke="#9a2430" stroke-width="3" opacity="0.75"/><path d="M755.2 303.6 L721.4 335" stroke="#8a2234" stroke-width="3.2" opacity="0.8"/></g></g></svg>
<div class="a" style="left:1070px;top:82px;width:1px;height:536px;background:#5c5c60;"></div>
<div class="a" style="left:1075px;top:82px;width:1px;height:536px;background:#5c5c60;"></div>
<div class="a" style="left:1076px;top:82px;width:504px;height:20px;background:#656ae0;"></div>
<span class="t" style="top:86.44px;font-size:12px;color:#fff;font-weight:700;letter-spacing:-0.213px;left:1078.80px;">Editor</span>
<svg style="left:1567px;top:88px" width="9" height="8" viewBox="0 0 9 8"><path d="M0.6 0.4 L8.2 6.9 M8.2 0.4 L0.6 6.9" stroke="#fff" stroke-width="1.5" fill="none"/></svg>
<div class="a" style="left:1076px;top:102px;width:504px;height:515px;background:#ffffff;"></div>
<div class="a" style="left:1076px;top:102px;width:1px;height:515px;background:#6e6e6e;"></div>
<div class="a" style="left:1579px;top:102px;width:1px;height:515px;background:#6e6e6e;"></div>
<div class="a" style="left:1077px;top:102px;width:502px;height:22px;background:#e4e5ea;"></div>
<div class="a" style="left:1077px;top:124px;width:502px;height:1px;background:#7a7a7a;"></div>
<svg style="left:1076px;top:104px" width="116" height="22" viewBox="1076 104 116 22"><path d="M1078.4 124.5 L1094.5 108.6 Q1096.5 106.9 1099 106.9 L1185 106.9 Q1187.6 106.9 1187.6 109.5 L1187.6 124.5" fill="#fff" stroke="#7a7a7a" stroke-width="1"/><path d="M1079.2 124.5 H1187.1" stroke="#fff" stroke-width="1.2"/></svg>
<span class="t" style="top:109.84px;font-size:12px;color:#000;font-weight:700;letter-spacing:-0.058px;left:1095.60px;">AvatarFrogTest</span>
<div class="a" style="left:1563px;top:125px;width:16px;height:492px;background:#f0f0f0;"></div>
<div class="a" style="left:1564px;top:142px;width:14px;height:270px;background:#cdcdcd;"></div>
<svg style="left:1566px;top:130px" width="10" height="8" viewBox="0 0 10 8"><path d="M1.2 6.4 L5 2.4 L8.8 6.4" fill="none" stroke="#555" stroke-width="1.8"/></svg>
<svg style="left:1566px;top:605px" width="10" height="8" viewBox="0 0 10 8"><path d="M1.2 1.4 L5 5.4 L8.8 1.4" fill="none" stroke="#555" stroke-width="1.8"/></svg>
<span class="t" style="top:155.04px;font-size:12px;color:#000;letter-spacing:0.189px;left:1081.70px;">Item Name</span>
<div class="a" style="left:1375px;top:149px;width:110px;height:23px;background:#f0f0f0;border:1px solid #7a7a7a;"></div>
<span class="t" style="top:154.34px;font-size:12px;color:#000;letter-spacing:-0.166px;left:1380.60px;">AvatarFrogTest</span>
<div class="a" style="left:1491px;top:126px;width:70px;height:70px;background:#fff;border:1px solid #a0a0a0;"></div>
<div class="a" style="left:1492px;top:127px;width:68px;height:68px;background:#fff;border:2px solid #e6e6e6;"></div>
<svg style="left:1491px;top:126px" width="70" height="70" viewBox="1491 126 70 70"><defs><filter id="mb"><feGaussianBlur stdDeviation="0.35"/></filter></defs><g filter="url(#mb)"><ellipse cx="1511.6" cy="171.2" rx="15.6" ry="5.2" fill="#17321a"/><ellipse cx="1541.2" cy="171.2" rx="15.4" ry="5.3" fill="#17321a"/><ellipse cx="1526.5" cy="169.6" rx="8" ry="3" fill="#17321a"/><ellipse cx="1513" cy="170" rx="9" ry="2.4" fill="#244a22" opacity="0.6"/><ellipse cx="1542" cy="170" rx="9" ry="2.4" fill="#244a22" opacity="0.6"/><path d="M1515.2 162 L1514.2 167.6 L1517.6 167.4 L1518 163 Z" fill="#a04aa8"/><path d="M1531 161 L1531 166.8 L1534 167.2 L1534.6 160 Z" fill="#9a48b0"/><path d="M1516 165.8 L1511 168 L1507.4 169.4 L1511.6 169.2 L1514.6 168.6 L1515.2 170 L1517.2 167.4 Z" fill="#4a46cc"/><path d="M1531.4 165.8 L1536 167.6 L1542.6 169.6 L1538 169.8 L1534.4 169 L1533.6 170.2 L1531 167.6 Z" fill="#4a46cc"/><path d="M1510.9 152.5 Q1511.6 148.6 1515.9 148 Q1519.2 147.8 1521.7 149.2 Q1524.2 146 1527.5 144.2 Q1530.2 143 1532.6 143.8 Q1535.6 145.4 1536.3 148.4 Q1537.6 151 1537 153.6 Q1536.6 157 1534.9 159.3 Q1534.4 163 1530.8 165.8 Q1527.6 167.4 1524.1 167 Q1520.6 166.6 1518.3 164.9 Q1515 163 1513.4 160.8 Q1511.4 158 1511 155.4 Z" fill="#f04a2a"/><path d="M1513.6 160.4 Q1524 163 1535.6 154 Q1536.2 158 1534.6 160.4 Q1533.6 164 1530.6 165.8 Q1524 168.4 1518.3 164.9 Q1515 163 1513.6 160.4 Z" fill="#d38c3c"/><path d="M1513.2 159.4 Q1524 161.6 1536 152.4 L1535.8 154.4 Q1524 163.6 1513.6 160.8 Z" fill="#f67a66"/><path d="M1517.4 162.2 Q1523.6 163 1528.6 159.8 Q1527.6 164 1523.4 164.6 Q1519 164.6 1517.4 162.2 Z" fill="#8a2024"/><ellipse cx="1523.2" cy="162.9" rx="2.5" ry="1.9" fill="#f2445e"/><path d="M1522 151.5 Q1527 150 1530 153" stroke="#ff7a40" stroke-width="1.6" fill="none" opacity="0.8"/><ellipse cx="1514.4" cy="154" rx="2.3" ry="3" fill="#0a0806" transform="rotate(-18 1514.4 154)"/><ellipse cx="1531.8" cy="148.4" rx="2.7" ry="2.5" fill="#0a0806"/><path d="M1512 152.6 Q1512.4 155.4 1513.6 156.6" stroke="#e8b424" stroke-width="0.9" fill="none"/><path d="M1530 146 Q1532.6 145.2 1534.6 146.8" stroke="#e8b424" stroke-width="0.9" fill="none"/><path d="M1517.6 149.6 L1519 152.4 M1520.6 150.4 L1522 153 M1525 146.6 L1526 149.6 M1527.6 145.6 L1528.6 148 M1516.4 156 L1518 157.6" stroke="#8a1a34" stroke-width="0.9" opacity="0.85"/></g></svg>
<span class="t" style="top:215.26px;font-size:13.4px;color:#000;font-weight:700;letter-spacing:-0.099px;left:1081.80px;">Item Settings</span>
<span class="t" style="top:245.14px;font-size:12px;color:#000;letter-spacing:0.106px;left:1081.80px;">Animation standard</span>
<span class="t" style="top:278.24px;font-size:12px;color:#000;letter-spacing:-0.409px;left:1081.80px;">Type</span>
<span class="t" style="top:308.04px;font-size:12px;color:#000;letter-spacing:0.096px;left:1081.80px;">Attached to:</span>
<div class="a" style="left:1414px;top:240px;width:143px;height:23px;background:#e1e1e1;border:1px solid #adadad;"></div>
<svg style="left:1543px;top:248px" width="10" height="7" viewBox="0 0 10 7"><path d="M1 1.2 L5 5.2 L9 1.2" fill="none" stroke="#333" stroke-width="1.1"/></svg>
<span class="t" style="top:245.94px;font-size:12px;color:#000;letter-spacing:-0.339px;left:1417.80px;">AnimazeStandard_1_0</span>
<div class="a" style="left:1495px;top:273px;width:62px;height:23px;background:#e1e1e1;border:1px solid #adadad;"></div>
<svg style="left:1543px;top:281px" width="10" height="7" viewBox="0 0 10 7"><path d="M1 1.2 L5 5.2 L9 1.2" fill="none" stroke="#333" stroke-width="1.1"/></svg>
<span class="t" style="top:278.94px;font-size:12px;color:#000;letter-spacing:0.044px;left:1498.40px;">Avatar</span>
<div class="a" style="left:1449px;top:306px;width:108px;height:23px;background:#e1e1e1;border:1px solid #adadad;"></div>
<svg style="left:1543px;top:314px" width="10" height="7" viewBox="0 0 10 7"><path d="M1 1.2 L5 5.2 L9 1.2" fill="none" stroke="#333" stroke-width="1.1"/></svg>
<span class="t" style="top:341.44px;font-size:12px;color:#000;letter-spacing:0.141px;left:1081.80px;">Item position:</span>
<span class="t" style="top:371.34px;font-size:12px;color:#000;letter-spacing:0.167px;left:1081.80px;">Item rotation:</span>
<span class="t" style="top:401.14px;font-size:12px;color:#000;letter-spacing:-0.183px;left:1081.80px;">Item scale:</span>
<div class="a" style="left:1237px;top:339px;width:20px;height:20px;background:#e4e4e4;border:1px solid #6e6e6e;box-shadow:inset 0 0 0 1px #fff;"></div>
<div class="a" style="left:1257px;top:339px;width:80px;height:20px;background:#fff;border:1px solid #6e6e6e;"></div>
<span class="t" style="top:342.94px;font-size:12px;color:#000;letter-spacing:0.387px;left:1243.19px;">X</span>
<span class="t" style="top:342.94px;font-size:12px;color:#000;letter-spacing:-0.552px;left:1273.90px;">0.000000</span>
<div class="a" style="left:1347px;top:339px;width:20px;height:20px;background:#e4e4e4;border:1px solid #6e6e6e;box-shadow:inset 0 0 0 1px #fff;"></div>
<div class="a" style="left:1367px;top:339px;width:80px;height:20px;background:#fff;border:1px solid #6e6e6e;"></div>
<span class="t" style="top:342.94px;font-size:12px;color:#000;letter-spacing:0.387px;left:1353.19px;">Y</span>
<span class="t" style="top:342.94px;font-size:12px;color:#000;letter-spacing:-0.552px;left:1383.90px;">0.000000</span>
<div class="a" style="left:1457px;top:339px;width:20px;height:20px;background:#e4e4e4;border:1px solid #6e6e6e;box-shadow:inset 0 0 0 1px #fff;"></div>
<div class="a" style="left:1477px;top:339px;width:80px;height:20px;background:#fff;border:1px solid #6e6e6e;"></div>
<span class="t" style="top:342.94px;font-size:12px;color:#000;letter-spacing:0.462px;left:1463.53px;">Z</span>
<span class="t" style="top:342.94px;font-size:12px;color:#000;letter-spacing:-0.552px;left:1493.90px;">0.000000</span>
<div class="a" style="left:1237px;top:369px;width:20px;height:20px;background:#e4e4e4;border:1px solid #6e6e6e;box-shadow:inset 0 0 0 1px #fff;"></div>
<div class="a" style="left:1257px;top:369px;width:80px;height:20px;background:#fff;border:1px solid #6e6e6e;"></div>
<span class="t" style="top:372.94px;font-size:12px;color:#000;letter-spacing:0.387px;left:1243.19px;">X</span>
<span class="t" style="top:372.94px;font-size:12px;color:#000;letter-spacing:-0.456px;left:1271.80px;">-0.000000</span>
<div class="a" style="left:1347px;top:369px;width:20px;height:20px;background:#e4e4e4;border:1px solid #6e6e6e;box-shadow:inset 0 0 0 1px #fff;"></div>
<div class="a" style="left:1367px;top:369px;width:80px;height:20px;background:#fff;border:1px solid #6e6e6e;"></div>
<span class="t" style="top:372.94px;font-size:12px;color:#000;letter-spacing:0.387px;left:1353.19px;">Y</span>
<span class="t" style="top:372.94px;font-size:12px;color:#000;letter-spacing:-0.552px;left:1383.90px;">0.000000</span>
<div class="a" style="left:1457px;top:369px;width:20px;height:20px;background:#e4e4e4;border:1px solid #6e6e6e;box-shadow:inset 0 0 0 1px #fff;"></div>
<div class="a" style="left:1477px;top:369px;width:80px;height:20px;background:#fff;border:1px solid #6e6e6e;"></div>
<span class="t" style="top:372.94px;font-size:12px;color:#000;letter-spacing:0.462px;left:1463.53px;">Z</span>
<span class="t" style="top:372.94px;font-size:12px;color:#000;letter-spacing:-0.456px;left:1491.80px;">-0.000000</span>
<div class="a" style="left:1457px;top:399px;width:20px;height:20px;background:#e4e4e4;border:1px solid #6e6e6e;box-shadow:inset 0 0 0 1px #fff;"></div>
<div class="a" style="left:1477px;top:399px;width:80px;height:20px;background:#fff;border:1px solid #6e6e6e;"></div>
<span class="t" style="top:402.94px;font-size:12px;color:#000;letter-spacing:-0.552px;left:1493.90px;">0.005000</span>
<div class="a" style="left:1449px;top:429px;width:108px;height:26px;background:#404040;border:1px solid #000;"></div>
<span class="t" style="top:436.32px;font-size:13.33px;color:#fff;letter-spacing:-0.166px;left:1458.60px;">Snap to ground</span>
<span class="t" style="top:467.14px;font-size:12px;color:#000;letter-spacing:-0.011px;left:1081.80px;">Friendly Name</span>
<div class="a" style="left:1257px;top:465px;width:300px;height:23px;background:#fff;border:1px solid #7a7a7a;"></div>
<span class="t" style="top:470.24px;font-size:12px;color:#000;letter-spacing:-0.076px;left:1262.90px;">Franky</span>
<span class="t" style="top:500.14px;font-size:12px;color:#000;letter-spacing:0.037px;left:1081.80px;">Description</span>
<div class="a" style="left:1257px;top:498px;width:300px;height:125px;background:#fff;border:1px solid #7a7a7a;"></div>
<div class="a" style="left:1539px;top:499px;width:17px;height:118px;background:#f0f0f0;"></div>
<svg style="left:1542px;top:505px" width="10" height="8" viewBox="0 0 10 8"><path d="M1.2 6.2 L5 2.4 L8.8 6.2" fill="none" stroke="#bdbdbd" stroke-width="1.6"/></svg>
<span class="t" style="top:502.94px;font-size:12px;color:#000;letter-spacing:0.068px;left:1262.90px;">World's champion for eating flies.</span>
<div class="a" style="left:0px;top:617px;width:1580px;height:2px;background:#5f6164;"></div>
<div class="a" style="left:0px;top:619px;width:1580px;height:4px;background:#84739b;"></div>
<div class="a" style="left:0px;top:623px;width:1580px;height:1px;background:#55555a;"></div>
<div class="a" style="left:1px;top:624px;width:785px;height:20px;background:#656ae0;"></div>
<span class="t" style="top:628.44px;font-size:12px;color:#fff;font-weight:700;letter-spacing:-0.048px;left:0.80px;">Animation Timeline (Skeletal)</span>
<svg style="left:773px;top:630px" width="9" height="8" viewBox="0 0 9 8"><path d="M0.6 0.4 L8.2 6.9 M8.2 0.4 L0.6 6.9" stroke="#fff" stroke-width="1.5" fill="none"/></svg>
<div class="a" style="left:1px;top:644px;width:785px;height:197px;background:#f0f0f0;"></div>
<div class="a" style="left:3px;top:649px;width:778px;height:187px;background:#ffffff;"></div>
<div class="a" style="left:786px;top:624px;width:1px;height:217px;background:#5c5c60;"></div>
<div class="a" style="left:791px;top:624px;width:1px;height:217px;background:#5c5c60;"></div>
<span class="t" style="top:660.94px;font-size:12px;color:#000;letter-spacing:0.300px;left:9.60px;">Animation:</span>
<div class="a" style="left:74px;top:655px;width:258px;height:23px;background:#e1e1e1;border:1px solid #adadad;"></div>
<svg style="left:318px;top:663px" width="10" height="7" viewBox="0 0 10 7"><path d="M0.8 1.2 L5 5.4 L9.2 1.2" fill="none" stroke="#333" stroke-width="1.1"/></svg>
<span class="t" style="top:660.94px;font-size:12px;color:#000;letter-spacing:0.082px;left:78.20px;">&lt;&lt; Animated by Puppeteer &gt;&gt;</span>
<div class="a" style="left:337px;top:654px;width:80px;height:26px;background:#404040;border:1px solid #000;"></div>
<span class="t" style="top:661.22px;font-size:13.33px;color:#fff;letter-spacing:0.224px;left:363.70px;">Play</span>
<div class="a" style="left:422px;top:654px;width:80px;height:26px;background:#404040;border:1px solid #000;"></div>
<span class="t" style="top:661.22px;font-size:13.33px;color:#fff;letter-spacing:0.102px;left:442.90px;">Pause</span>
<div class="a" style="left:507px;top:654px;width:80px;height:26px;background:#404040;border:1px solid #000;"></div>
<span class="t" style="top:661.22px;font-size:13.33px;color:#fff;letter-spacing:0.756px;left:532.15px;">Stop</span>
<div class="a" style="left:592px;top:654px;width:80px;height:26px;background:#404040;border:1px solid #000;"></div>
<span class="t" style="top:661.22px;font-size:13.33px;color:#fff;letter-spacing:-0.008px;left:614.60px;">Reset</span>
<div class="a" style="left:8px;top:690px;width:768px;height:80px;background:#fff;border:1px solid #a9adb3;"></div>
<div class="a" style="left:10px;top:712px;width:764px;height:56px;background:#646464;"></div>
<svg style="left:0px;top:690px" width="786" height="80" viewBox="0 690 786 80"><path d="M10 712.5 H774" stroke="#000" stroke-width="1"/><path d="M773.5 712 V768" stroke="#000" stroke-width="1"/><path d="M18.04 712 V724.5 M25.67 712 V724.5 M33.31 712 V724.5 M40.95 712 V724.5 M48.58 712 V724.5 M56.22 712 V724.5 M63.86 712 V724.5 M71.50 712 V724.5 M79.13 712 V724.5 M86.77 712 V731.5 M94.41 712 V724.5 M102.04 712 V724.5 M109.68 712 V724.5 M117.32 712 V724.5 M124.95 712 V724.5 M132.59 712 V724.5 M140.23 712 V724.5 M147.87 712 V724.5 M155.50 712 V724.5 M163.14 712 V731.5 M170.78 712 V724.5 M178.41 712 V724.5 M186.05 712 V724.5 M193.69 712 V724.5 M201.32 712 V724.5 M208.96 712 V724.5 M216.60 712 V724.5 M224.24 712 V724.5 M231.87 712 V724.5 M239.51 712 V731.5 M247.15 712 V724.5 M254.78 712 V724.5 M262.42 712 V724.5 M270.06 712 V724.5 M277.69 712 V724.5 M285.33 712 V724.5 M292.97 712 V724.5 M300.61 712 V724.5 M308.24 712 V724.5 M315.88 712 V731.5 M323.52 712 V724.5 M331.15 712 V724.5 M338.79 712 V724.5 M346.43 712 V724.5 M354.06 712 V724.5 M361.70 712 V724.5 M369.34 712 V724.5 M376.98 712 V724.5 M384.61 712 V724.5 M392.25 712 V731.5 M399.89 712 V724.5 M407.52 712 V724.5 M415.16 712 V724.5 M422.80 712 V724.5 M430.43 712 V724.5 M438.07 712 V724.5 M445.71 712 V724.5 M453.35 712 V724.5 M460.98 712 V724.5 M468.62 712 V731.5 M476.26 712 V724.5 M483.89 712 V724.5 M491.53 712 V724.5 M499.17 712 V724.5 M506.80 712 V724.5 M514.44 712 V724.5 M522.08 712 V724.5 M529.72 712 V724.5 M537.35 712 V724.5 M544.99 712 V731.5 M552.63 712 V724.5 M560.26 712 V724.5 M567.90 712 V724.5 M575.54 712 V724.5 M583.17 712 V724.5 M590.81 712 V724.5 M598.45 712 V724.5 M606.09 712 V724.5 M613.72 712 V724.5 M621.36 712 V731.5 M629.00 712 V724.5 M636.63 712 V724.5 M644.27 712 V724.5 M651.91 712 V724.5 M659.54 712 V724.5 M667.18 712 V724.5 M674.82 712 V724.5 M682.46 712 V724.5 M690.09 712 V724.5 M697.73 712 V731.5 M705.37 712 V724.5 M713.00 712 V724.5 M720.64 712 V724.5 M728.28 712 V724.5 M735.91 712 V724.5 M743.55 712 V724.5 M751.19 712 V724.5 M758.83 712 V724.5 M766.46 712 V724.5" stroke="#000" stroke-width="1" fill="none"/><path d="M10.5 692 V768" stroke="#f00" stroke-width="1.2"/></svg>
<span class="t" style="top:693.94px;font-size:12px;color:#000;letter-spacing:0.119px;left:10.40px;">0</span>
<span class="t" style="top:693.94px;font-size:12px;color:#000;letter-spacing:-0.752px;left:86.57px;">10</span>
<span class="t" style="top:693.94px;font-size:12px;color:#000;letter-spacing:-0.752px;left:162.94px;">20</span>
<span class="t" style="top:693.94px;font-size:12px;color:#000;letter-spacing:-0.752px;left:239.31px;">30</span>
<span class="t" style="top:693.94px;font-size:12px;color:#000;letter-spacing:-0.752px;left:315.68px;">40</span>
<span class="t" style="top:693.94px;font-size:12px;color:#000;letter-spacing:-0.752px;left:392.05px;">50</span>
<span class="t" style="top:693.94px;font-size:12px;color:#000;letter-spacing:-0.752px;left:468.42px;">60</span>
<span class="t" style="top:693.94px;font-size:12px;color:#000;letter-spacing:-0.752px;left:544.79px;">70</span>
<span class="t" style="top:693.94px;font-size:12px;color:#000;letter-spacing:-0.752px;left:621.16px;">80</span>
<span class="t" style="top:693.94px;font-size:12px;color:#000;letter-spacing:-0.752px;left:697.53px;">90</span>
<span class="t" style="top:693.94px;font-size:12px;color:#000;letter-spacing:-0.816px;left:753.00px;">100</span>
<span class="t" style="top:753.94px;font-size:12px;color:#000;letter-spacing:0.119px;left:10.40px;">0</span>
<span class="t" style="top:777.04px;font-size:12px;color:#000;letter-spacing:-0.238px;left:7.90px;">Time: 0.00 / 0.00</span>
<div class="a" style="left:792px;top:624px;width:788px;height:20px;background:#656ae0;"></div>
<span class="t" style="top:628.44px;font-size:12px;color:#fff;font-weight:700;letter-spacing:0.007px;left:794.60px;">Asset Explorer</span>
<svg style="left:1567px;top:630px" width="9" height="8" viewBox="0 0 9 8"><path d="M0.6 0.4 L8.2 6.9 M8.2 0.4 L0.6 6.9" stroke="#fff" stroke-width="1.5" fill="none"/></svg>
<div class="a" style="left:792px;top:644px;width:788px;height:197px;background:#ffffff;"></div>
<div class="a" style="left:797px;top:649px;width:195px;height:187px;background:#fff;border:1px solid #828790;"></div>
<div class="a" style="left:992px;top:644px;width:4px;height:197px;background:#efefef;"></div>
<div class="a" style="left:819px;top:651px;width:80px;height:18px;background:#d9d9d9;"></div>
<svg style="left:807px;top:655px" width="7" height="10" viewBox="0 0 7 10"><path d="M1.2 1 L5.4 5 L1.2 9" fill="none" stroke="#a6a6a6" stroke-width="1.2"/></svg>
<svg style="left:807px;top:674px" width="7" height="10" viewBox="0 0 7 10"><path d="M1.2 1 L5.4 5 L1.2 9" fill="none" stroke="#a6a6a6" stroke-width="1.2"/></svg>
<div class="a" style="left:818px;top:660px;width:3px;height:1px;background:repeating-linear-gradient(90deg,#8a8a8a 0 1px,transparent 1px 2px);"></div>
<div class="a" style="left:818px;top:679px;width:3px;height:1px;background:repeating-linear-gradient(90deg,#8a8a8a 0 1px,transparent 1px 2px);"></div>
<div class="a" style="left:810px;top:669px;width:1px;height:1px;background:#777;"></div>
<svg style="left:823px;top:652px" width="13" height="16" viewBox="0 0 13 16"><path d="M0.5 0.6 H11.3 V15.4 H0.5 Z" fill="#ffe597" stroke="#e8c352" stroke-width="0.9"/><path d="M10.4 9.6 H12.4 V15.4 H10.4 Z" fill="#ffe08a" stroke="#e8c352" stroke-width="0.8"/></svg>
<svg style="left:823px;top:670px" width="13" height="16" viewBox="0 0 13 16"><path d="M0.5 0.6 H11.3 V15.4 H0.5 Z" fill="#ffe597" stroke="#e8c352" stroke-width="0.9"/><path d="M10.4 9.6 H12.4 V15.4 H10.4 Z" fill="#ffe08a" stroke="#e8c352" stroke-width="0.8"/></svg>
<span class="t" style="top:654.04px;font-size:12px;color:#000;letter-spacing:-0.445px;left:841.60px;">Resources</span>
<span class="t" style="top:672.44px;font-size:12px;color:#000;letter-spacing:-0.423px;left:841.60px;">Assets</span>
<div class="a" style="left:996px;top:653px;width:69px;height:20px;background:#cce8ff;border:1px solid #99d1ff;"></div>
<span class="t" style="top:659.24px;font-size:12px;color:#000;letter-spacing:-0.445px;left:1004.70px;">Resources</span>
<div class="a" style="left:1495px;top:649px;width:80px;height:26px;background:#404040;border:1px solid #000;"></div>
<span class="t" style="top:656.32px;font-size:13.33px;color:#fff;letter-spacing:-0.163px;left:1512.10px;">Refresh</span>
<div class="a" style="left:996px;top:680px;width:579px;height:156px;background:#fff;border:1px solid #828790;"></div>
<div class="a" style="left:1557px;top:681px;width:17px;height:154px;background:#f0f0f0;"></div>
<div class="a" style="left:1557px;top:699px;width:15px;height:114px;background:#cdcdcd;"></div>
<svg style="left:1560px;top:687px" width="10" height="8" viewBox="0 0 10 8"><path d="M1.2 6.2 L5 2.4 L8.8 6.2" fill="none" stroke="#555" stroke-width="1.6"/></svg>
<svg style="left:1560px;top:821px" width="10" height="8" viewBox="0 0 10 8"><path d="M1.2 1.8 L5 5.6 L8.8 1.8" fill="none" stroke="#555" stroke-width="1.6"/></svg>
<div class="a" style="left:999px;top:682px;width:74px;height:54px;background:#d9d9d9;"></div>
<svg style="left:1024.8px;top:688px" width="19" height="27" viewBox="0 0 19 27"><defs><linearGradient id="fg" x1="0" x2="1"><stop offset="0" stop-color="#f1cf66"/><stop offset="1" stop-color="#fbe398"/></linearGradient></defs><path d="M4.5 0.5 H16.2 V14.5 L18.4 17 V23 H5 Z" fill="url(#fg)"/><path d="M0.3 0.4 L5.2 3.6 V27 L0.3 22.6 Z" fill="#fbe9a8"/><path d="M5.2 3.6 V27" stroke="#e9c55a" stroke-width="0.6"/></svg>
<span class="t" style="top:720.84px;font-size:12px;color:#000;letter-spacing:0.525px;left:1032.40px;">..</span>
<svg style="left:1099.8px;top:688px" width="19" height="27" viewBox="0 0 19 27"><path d="M4.5 0.5 H16.2 V14.5 L18.4 17 V23 H5 Z" fill="url(#fg)"/><path d="M0.3 0.4 L5.2 3.6 V27 L0.3 22.6 Z" fill="#fbe9a8"/><path d="M5.2 3.6 V27" stroke="#e9c55a" stroke-width="0.6"/></svg>
<span class="t" style="top:720.84px;font-size:12px;color:#000;letter-spacing:-0.129px;left:1077.20px;">AvatarFrog...</span>
<svg style="left:1174.8px;top:688px" width="19" height="27" viewBox="0 0 19 27"><path d="M4.5 0.5 H16.2 V14.5 L18.4 17 V23 H5 Z" fill="url(#fg)"/><path d="M0.3 0.4 L5.2 3.6 V27 L0.3 22.6 Z" fill="#fbe9a8"/><path d="M5.2 3.6 V27" stroke="#e9c55a" stroke-width="0.6"/></svg>
<span class="t" style="top:720.84px;font-size:12px;color:#000;left:1152.30px;">customizat...</span>
<svg style="left:1249.8px;top:688px" width="19" height="27" viewBox="0 0 19 27"><path d="M4.5 0.5 H16.2 V14.5 L18.4 17 V23 H5 Z" fill="url(#fg)"/><path d="M0.3 0.4 L5.2 3.6 V27 L0.3 22.6 Z" fill="#fbe9a8"/><path d="M5.2 3.6 V27" stroke="#e9c55a" stroke-width="0.6"/></svg>
<span class="t" style="top:720.84px;font-size:12px;color:#000;left:1227.30px;">customizat...</span>
<svg style="left:1321px;top:684.7px" width="29" height="30" viewBox="0 0 29 30"><rect x="0" y="0" width="29" height="30" rx="2" fill="#222"/><path d="M0 4 V2 Q0 0 2 0 H27 Q29 0 29 2 V4 Z" fill="#000"/><rect x="6.7" y="6.2" width="16.4" height="3.5" rx="1" fill="#f4f4f4"/><rect x="6.7" y="11.4" width="16.4" height="3.5" rx="1" fill="#f4f4f4"/><rect x="6.7" y="16.6" width="16.4" height="3.5" rx="1" fill="#f4f4f4"/><circle cx="10" cy="25.5" r="1.4" fill="#2fb6ec"/><circle cx="14.9" cy="25.5" r="1.4" fill="#e94bc0"/><circle cx="19.7" cy="25.5" r="1.4" fill="#f4c430"/></svg>
<span class="t" style="top:720.84px;font-size:12px;color:#000;letter-spacing:0.006px;left:1303.00px;">AvatarLily....</span>
<svg style="left:1396px;top:684.7px" width="29" height="30" viewBox="0 0 29 30"><rect x="0" y="0" width="29" height="30" rx="2" fill="#222"/><path d="M0 4 V2 Q0 0 2 0 H27 Q29 0 29 2 V4 Z" fill="#000"/><rect x="6.7" y="6.2" width="16.4" height="3.5" rx="1" fill="#f4f4f4"/><rect x="6.7" y="11.4" width="16.4" height="3.5" rx="1" fill="#f4f4f4"/><rect x="6.7" y="16.6" width="16.4" height="3.5" rx="1" fill="#f4f4f4"/><circle cx="10" cy="25.5" r="1.4" fill="#2fb6ec"/><circle cx="14.9" cy="25.5" r="1.4" fill="#e94bc0"/><circle cx="19.7" cy="25.5" r="1.4" fill="#f4c430"/></svg>
<span class="t" style="top:720.84px;font-size:12px;color:#000;letter-spacing:-0.677px;left:1377.20px;">F_Pants_00...</span>
<svg style="left:1471px;top:684.7px" width="29" height="30" viewBox="0 0 29 30"><rect x="0" y="0" width="29" height="30" rx="2" fill="#222"/><path d="M0 4 V2 Q0 0 2 0 H27 Q29 0 29 2 V4 Z" fill="#000"/><rect x="6.7" y="6.2" width="16.4" height="3.5" rx="1" fill="#f4f4f4"/><rect x="6.7" y="11.4" width="16.4" height="3.5" rx="1" fill="#f4f4f4"/><rect x="6.7" y="16.6" width="16.4" height="3.5" rx="1" fill="#f4f4f4"/><circle cx="10" cy="25.5" r="1.4" fill="#2fb6ec"/><circle cx="14.9" cy="25.5" r="1.4" fill="#e94bc0"/><circle cx="19.7" cy="25.5" r="1.4" fill="#f4c430"/></svg>
<span class="t" style="top:720.84px;font-size:12px;color:#000;letter-spacing:-0.677px;left:1452.20px;">F_Pants_03...</span>
<svg style="left:1021px;top:759.7px" width="29" height="30" viewBox="0 0 29 30"><rect x="0" y="0" width="29" height="30" rx="2" fill="#222"/><path d="M0 4 V2 Q0 0 2 0 H27 Q29 0 29 2 V4 Z" fill="#000"/><rect x="6.7" y="6.2" width="16.4" height="3.5" rx="1" fill="#f4f4f4"/><rect x="6.7" y="11.4" width="16.4" height="3.5" rx="1" fill="#f4f4f4"/><rect x="6.7" y="16.6" width="16.4" height="3.5" rx="1" fill="#f4f4f4"/><circle cx="10" cy="25.5" r="1.4" fill="#2fb6ec"/><circle cx="14.9" cy="25.5" r="1.4" fill="#e94bc0"/><circle cx="19.7" cy="25.5" r="1.4" fill="#f4c430"/></svg>
<span class="t" style="top:796.24px;font-size:12px;color:#000;letter-spacing:-0.511px;left:1002.80px;">F_Shirt_00....</span>
<svg style="left:1096px;top:759.7px" width="29" height="30" viewBox="0 0 29 30"><rect x="0" y="0" width="29" height="30" rx="2" fill="#222"/><path d="M0 4 V2 Q0 0 2 0 H27 Q29 0 29 2 V4 Z" fill="#000"/><rect x="6.7" y="6.2" width="16.4" height="3.5" rx="1" fill="#f4f4f4"/><rect x="6.7" y="11.4" width="16.4" height="3.5" rx="1" fill="#f4f4f4"/><rect x="6.7" y="16.6" width="16.4" height="3.5" rx="1" fill="#f4f4f4"/><circle cx="10" cy="25.5" r="1.4" fill="#2fb6ec"/><circle cx="14.9" cy="25.5" r="1.4" fill="#e94bc0"/><circle cx="19.7" cy="25.5" r="1.4" fill="#f4c430"/></svg>
<span class="t" style="top:796.24px;font-size:12px;color:#000;letter-spacing:-0.550px;left:1078.05px;">F_Shirt_02....</span>
<svg style="left:1171px;top:759.7px" width="29" height="30" viewBox="0 0 29 30"><rect x="0" y="0" width="29" height="30" rx="2" fill="#222"/><path d="M0 4 V2 Q0 0 2 0 H27 Q29 0 29 2 V4 Z" fill="#000"/><rect x="6.7" y="6.2" width="16.4" height="3.5" rx="1" fill="#f4f4f4"/><rect x="6.7" y="11.4" width="16.4" height="3.5" rx="1" fill="#f4f4f4"/><rect x="6.7" y="16.6" width="16.4" height="3.5" rx="1" fill="#f4f4f4"/><circle cx="10" cy="25.5" r="1.4" fill="#2fb6ec"/><circle cx="14.9" cy="25.5" r="1.4" fill="#e94bc0"/><circle cx="19.7" cy="25.5" r="1.4" fill="#f4c430"/></svg>
<span class="t" style="top:796.24px;font-size:12px;color:#000;letter-spacing:-0.613px;left:1153.80px;">F_Skirt_01....</span>
<svg style="left:1246px;top:759.7px" width="29" height="30" viewBox="0 0 29 30"><rect x="0" y="0" width="29" height="30" rx="2" fill="#222"/><path d="M0 4 V2 Q0 0 2 0 H27 Q29 0 29 2 V4 Z" fill="#000"/><rect x="6.7" y="6.2" width="16.4" height="3.5" rx="1" fill="#f4f4f4"/><rect x="6.7" y="11.4" width="16.4" height="3.5" rx="1" fill="#f4f4f4"/><rect x="6.7" y="16.6" width="16.4" height="3.5" rx="1" fill="#f4f4f4"/><circle cx="10" cy="25.5" r="1.4" fill="#2fb6ec"/><circle cx="14.9" cy="25.5" r="1.4" fill="#e94bc0"/><circle cx="19.7" cy="25.5" r="1.4" fill="#f4c430"/></svg>
<span class="t" style="top:796.24px;font-size:12px;color:#000;letter-spacing:0.081px;left:1227.00px;">PropCircul...</span>
<svg style="left:1321px;top:759.7px" width="29" height="30" viewBox="0 0 29 30"><rect x="0" y="0" width="29" height="30" rx="2" fill="#222"/><path d="M0 4 V2 Q0 0 2 0 H27 Q29 0 29 2 V4 Z" fill="#000"/><rect x="6.7" y="6.2" width="16.4" height="3.5" rx="1" fill="#f4f4f4"/><rect x="6.7" y="11.4" width="16.4" height="3.5" rx="1" fill="#f4f4f4"/><rect x="6.7" y="16.6" width="16.4" height="3.5" rx="1" fill="#f4f4f4"/><circle cx="10" cy="25.5" r="1.4" fill="#2fb6ec"/><circle cx="14.9" cy="25.5" r="1.4" fill="#e94bc0"/><circle cx="19.7" cy="25.5" r="1.4" fill="#f4c430"/></svg>
<span class="t" style="top:796.24px;font-size:12px;color:#000;letter-spacing:-0.053px;left:1303.45px;">PropEvilM...</span>
<svg style="left:1396px;top:759.7px" width="29" height="30" viewBox="0 0 29 30"><rect x="0" y="0" width="29" height="30" rx="2" fill="#222"/><path d="M0 4 V2 Q0 0 2 0 H27 Q29 0 29 2 V4 Z" fill="#000"/><rect x="6.7" y="6.2" width="16.4" height="3.5" rx="1" fill="#f4f4f4"/><rect x="6.7" y="11.4" width="16.4" height="3.5" rx="1" fill="#f4f4f4"/><rect x="6.7" y="16.6" width="16.4" height="3.5" rx="1" fill="#f4f4f4"/><circle cx="10" cy="25.5" r="1.4" fill="#2fb6ec"/><circle cx="14.9" cy="25.5" r="1.4" fill="#e94bc0"/><circle cx="19.7" cy="25.5" r="1.4" fill="#f4c430"/></svg>
<span class="t" style="top:796.24px;font-size:12px;color:#000;letter-spacing:-0.203px;left:1377.70px;">cc_female....</span>
<svg style="left:1471px;top:759.7px" width="29" height="30" viewBox="0 0 29 30"><rect x="0" y="0" width="29" height="30" rx="2" fill="#222"/><path d="M0 4 V2 Q0 0 2 0 H27 Q29 0 29 2 V4 Z" fill="#000"/><rect x="6.7" y="6.2" width="16.4" height="3.5" rx="1" fill="#f4f4f4"/><rect x="6.7" y="11.4" width="16.4" height="3.5" rx="1" fill="#f4f4f4"/><rect x="6.7" y="16.6" width="16.4" height="3.5" rx="1" fill="#f4f4f4"/><circle cx="10" cy="25.5" r="1.4" fill="#2fb6ec"/><circle cx="14.9" cy="25.5" r="1.4" fill="#e94bc0"/><circle cx="19.7" cy="25.5" r="1.4" fill="#f4c430"/></svg>
<span class="t" style="top:796.24px;font-size:12px;color:#000;letter-spacing:-0.025px;left:1450.30px;">crown_king...</span>
<div class="a" style="left:135px;top:167px;width:180px;height:255px;background:#f2f2f2;border:1px solid #cfcfcf;box-shadow:3px 3px 4px rgba(0,0,0,0.45);"></div>
<div class="a" style="left:138px;top:192px;width:174px;height:22px;background:#91c9f7;"></div>
<span class="t" style="top:175.04px;font-size:12px;color:#000;letter-spacing:0.518px;left:169.60px;">Add</span>
<span class="t" style="top:197.04px;font-size:12px;color:#000;letter-spacing:-0.257px;left:169.60px;">Save item</span>
<span class="t" style="top:219.04px;font-size:12px;color:#000;letter-spacing:0.125px;left:169.60px;">Bundle</span>
<span class="t" style="top:241.04px;font-size:12px;color:#000;letter-spacing:0.095px;left:169.60px;">Check integrity</span>
<span class="t" style="top:263.04px;font-size:12px;color:#000;letter-spacing:-0.247px;left:169.60px;">Reload</span>
<span class="t" style="top:285.04px;font-size:12px;color:#000;letter-spacing:0.258px;left:169.60px;">Clone</span>
<span class="t" style="top:307.04px;font-size:12px;color:#000;letter-spacing:-0.291px;left:169.60px;">Save item as...</span>
<span class="t" style="top:329.04px;font-size:12px;color:#000;letter-spacing:-0.353px;left:169.60px;">Export As OBJ</span>
<span class="t" style="top:351.04px;font-size:12px;color:#000;letter-spacing:-0.364px;left:169.60px;">Reset camera</span>
<span class="t" style="top:373.04px;font-size:12px;color:#000;letter-spacing:-0.219px;left:169.60px;">Save all materials</span>
<div class="a" style="left:166px;top:393px;width:146px;height:1px;background:#d7d7d7;"></div>
<span class="t" style="top:402.14px;font-size:12px;color:#000;letter-spacing:-0.009px;left:169.60px;">Remove item</span>
<svg style="left:296px;top:175px" width="8" height="11" viewBox="0 0 8 11"><path d="M2.6 1.6 L6.4 5.5 L2.6 9.4" fill="none" stroke="#222" stroke-width="1.1"/></svg>
<svg style="left:255px;top:210px" width="55" height="52" viewBox="255 210 55 52"><path d="M261.5 216.6 L293 217.3 L286.5 224.5 L302.7 241.4 L288.4 256.1 L271.5 240.7 L263.7 247.5 Z" fill="#00ffff"/></svg>
<div class="a" style="left:0px;top:0px;width:1px;height:845px;background:#5a5a5a;"></div>
<div class="a" style="left:1580px;top:0px;width:2px;height:845px;background:#2b2b2e;"></div>
<div class="a" style="left:0px;top:841px;width:1580px;height:1px;background:#58585a;"></div>
<div class="a" style="left:0px;top:842px;width:1580px;height:1px;background:#e2e2e2;"></div>
<div class="a" style="left:0px;top:843px;width:1580px;height:2px;background:#777777;"></div>
</body></html>
